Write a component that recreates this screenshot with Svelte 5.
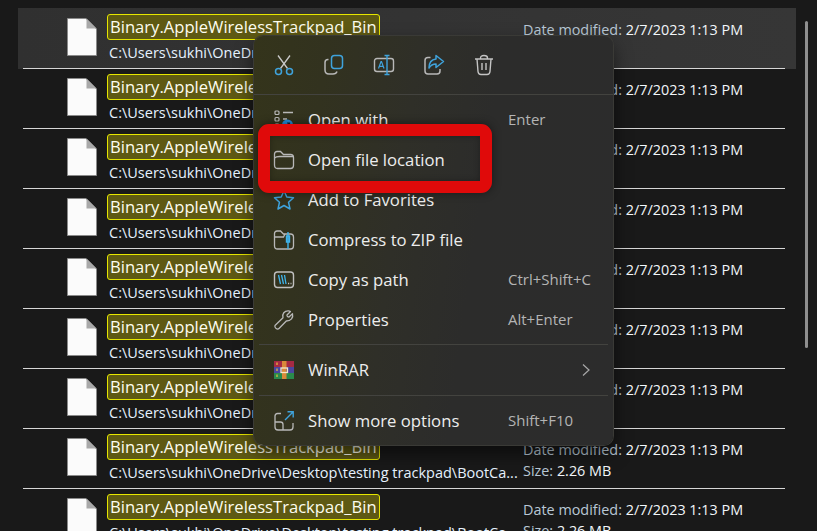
<script>
  const rows = [0, 1, 2, 3, 4, 5, 6, 7, 8];
  const path = "C:\\Users\\sukhi\\OneDrive\\Desktop\\testing trackpad\\BootCa...";
</script>

<div class="page">
  <div class="list">
    {#each rows as r}
      <div class="row" class:hover={r === 0}>
        <div class="row-main">
          <svg class="file" width="30" height="38" viewBox="0 0 30 38">
            <path d="M.5.5H19L29.500 11V37.500H.5Z" fill="#fbfbfb" stroke="#8a8a8a" />
            <path d="M19.500 .5V10.500H29.500Z" fill="#a8a8a8" />
          </svg>
          <div class="names">
            <div class="name">Binary.AppleWirelessTrackpad_Bin</div>
            <div class="sub">{path}</div>
          </div>
          <div class="meta">
            <div><span class="key">Date modified:</span> 2/7/2023 1:13 PM</div>
            <div><span class="key">Size:</span> 2.26 MB</div>
          </div>
        </div>
        <div class="sep"></div>
      </div>
    {/each}
  </div>

  <div class="scrollbar"></div>

  <div class="menu">
    <div class="tools">
      <svg width="22" height="22" viewBox="0 0 22 22" fill="none">
        <path d="M5 1.500 14.500 14.500M17 1.500 7.500 14.500" stroke="#c8c8c8" stroke-width="1.300" />
        <circle cx="5.500" cy="17.500" r="3" stroke="#3fa3dc" stroke-width="1.500" />
        <circle cx="16.500" cy="17.500" r="3" stroke="#3fa3dc" stroke-width="1.500" />
      </svg>
      <svg width="22" height="22" viewBox="0 0 22 22" fill="none">
        <rect x="8.500" y="1.500" width="11" height="13" rx="3" stroke="#3fa3dc" stroke-width="1.500" />
        <path d="M5.500 5.500H5C3 5.500 2 7 2 8.500V16C2 18.500 3.500 20 6 20H10C12 20 13.500 19 14 17.500" stroke="#b8b8b8" stroke-width="1.500" />
      </svg>
      <svg width="22" height="22" viewBox="0 0 22 22" fill="none">
        <path d="M14 4.500H4C2.500 4.500 1.500 5.500 1.500 7V15C1.500 16.500 2.500 17.500 4 17.500H14M14 4.500H18C19.500 4.500 20.500 5.500 20.500 7V15C20.500 16.500 19.500 17.500 18 17.500H14" stroke="#b8b8b8" stroke-width="1.400" />
        <path d="M14 2V20M11.500 1.500H16.500M11.500 20.500H16.500" stroke="#3fa3dc" stroke-width="1.400" />
        <path d="M5.500 14.500 8 7.500H8.500L11 14.500M6.400 12.300H10.100" stroke="#3fa3dc" stroke-width="1.200" />
      </svg>
      <svg width="22" height="22" viewBox="0 0 22 22" fill="none">
        <path d="M13 1.500 20.500 7.500 13 13.500V10C9.500 10 7.500 11.500 6 14 6 9 8.500 5.500 13 5Z" stroke="#3fa3dc" stroke-width="1.500" stroke-linejoin="round" />
        <path d="M7.500 3.500H5C3 3.500 2 4.500 2 6.500V17C2 19 3 20 5 20H14C16 20 17 19 17 17V15" stroke="#b8b8b8" stroke-width="1.500" />
      </svg>
      <svg width="22" height="22" viewBox="0 0 22 22" fill="none" stroke="#c4c4c4" stroke-width="1.400">
        <path d="M2 5H20M7.500 5V4C7.500 2.500 8.500 1.500 11 1.500 13.500 1.500 14.500 2.500 14.500 4V5" />
        <path d="M4 5 5 17.500C5.200 19.500 6.300 20.500 8 20.500H14C15.700 20.500 16.800 19.500 17 17.500L18 5" />
        <path d="M9 9V16M13 9V16" />
      </svg>
    </div>
    <div class="line full"></div>

    <div class="items">
      <div class="item">
        <svg width="22" height="22" viewBox="0 0 22 22" fill="none">
          <path d="M10 3.500H20M10 10H14" stroke="#b8b8b8" stroke-width="1.300" />
          <rect x="2" y="2" width="4" height="3.500" rx="1" stroke="#b8b8b8" stroke-width="1.200" />
          <rect x="2" y="8.500" width="4" height="3.500" rx="1" stroke="#b8b8b8" stroke-width="1.200" />
          <rect x="2" y="15" width="4" height="3.500" rx="1" stroke="#b8b8b8" stroke-width="1.200" />
          <circle cx="14.500" cy="16" r="5.500" fill="#1f88d8" />
          <path d="M12.500 18 16.500 14M14 14H16.500V16.500" stroke="#10203a" stroke-width="1.200" />
        </svg>
        <span class="label">Open with</span>
        <span class="key-hint">Enter</span>
      </div>
      <div class="item">
        <svg width="22" height="22" viewBox="0 0 22 22" fill="none" stroke="#b8b8b8" stroke-width="1.300">
          <path d="M1.500 16V5C1.500 3.500 2.500 2.500 4 2.500H7.500L10.500 5.500H17.500C19.500 5.500 20.500 6.500 20.500 8.500V16.500C20.500 18.500 19.500 19.500 17.500 19.500H4.500C2.500 19.500 1.500 18.500 1.500 16Z" />
          <path d="M1.500 9C3 7.500 4.500 7.500 6.500 7.500H20" />
        </svg>
        <span class="label">Open file location</span>
      </div>
      <div class="item">
        <svg width="22" height="22" viewBox="0 0 22 22" fill="none">
          <path d="M11 1.800 13.800 8 20.500 8.700 15.500 13.200 17 20 11 16.500 5 20 6.500 13.200 1.500 8.700 8.200 8Z" stroke="#3fa3dc" stroke-width="1.500" stroke-linejoin="round" />
        </svg>
        <span class="label">Add to Favorites</span>
      </div>
      <div class="item">
        <svg width="22" height="22" viewBox="0 0 22 22" fill="none">
          <path d="M1.500 17V4.500C1.500 3 2.500 2 4 2H7.500L10.500 5H17.500C19.500 5 20.500 6 20.500 8V17C20.500 19 19.500 20 17.500 20H4.500C2.500 20 1.500 19 1.500 17Z" stroke="#b8b8b8" stroke-width="1.300" />
          <path d="M1.500 8H10.500L12 5" stroke="#b8b8b8" stroke-width="1.300" />
          <path d="M15 3V20M13.500 7H16.500V13H13.500Z" stroke="#3fb4ec" stroke-width="1.400" />
        </svg>
        <span class="label">Compress to ZIP file</span>
      </div>
      <div class="item">
        <svg width="22" height="22" viewBox="0 0 22 22" fill="none">
          <rect x="1.500" y="3" width="19" height="15.500" rx="3" stroke="#c0c0c0" stroke-width="1.400" />
          <path d="M5.500 6 7.500 15M8.500 6 10.500 15M11.500 6 13 15" stroke="#3fb4ec" stroke-width="1.300" />
          <path d="M15 14.500H16.200M17.500 14.500H18.500" stroke="#c0c0c0" stroke-width="1.400" />
        </svg>
        <span class="label">Copy as path</span>
        <span class="key-hint">Ctrl+Shift+C</span>
      </div>
      <div class="item">
        <svg width="22" height="22" viewBox="0 0 22 22" fill="none">
          <path d="M2 16.500 10 8.700C8.800 5 11.500 1.500 15.500 1.800 16.500 1.900 17 2.200 17.500 2.500L14 6C13.800 7 14.500 8 16 8L19.500 4.800C20.500 8.500 18 12 13.300 12L6 19.500C4.500 21 1 19 2 16.500Z" stroke="#b8b8b8" stroke-width="1.300" stroke-linejoin="round" />
        </svg>
        <span class="label">Properties</span>
        <span class="key-hint">Alt+Enter</span>
      </div>
    </div>

    <div class="line"></div>

    <div class="item rar">
      <svg width="22" height="20" viewBox="0 0 22 20">
        <rect x="1" y="1" width="20" height="6" fill="#a52a44" />
        <rect x="1" y="7" width="20" height="6" fill="#4a46a0" />
        <rect x="1" y="13" width="20" height="6" fill="#2a8a4c" />
        <path d="M4 2.500V5M4 8.500V11M4 14.500V17" stroke="#e8c040" stroke-width="1.200" />
        <rect x="9" y="1" width="4.500" height="18" fill="#d98a3a" />
        <rect x="8" y="8" width="6.500" height="4.500" fill="none" stroke="#f4e8c8" stroke-width="1.300" />
      </svg>
      <span class="label">WinRAR</span>
      <svg class="chev" width="10" height="14" viewBox="0 0 10 14" fill="none">
        <path d="M2 1.500 8 7 2 12.500" stroke="#a8a8a8" stroke-width="1.200" />
      </svg>
    </div>

    <div class="line"></div>

    <div class="item">
      <svg width="22" height="22" viewBox="0 0 22 22" fill="none">
        <path d="M8 3.500H4.500C3 3.500 2 4.500 2 6V17C2 19 3 20 5 20H17C19 20 20 19 20 17V13" stroke="#b8b8b8" stroke-width="1.300" />
        <path d="M2 12H7.500C9 12 10 13 10 14.500V20" stroke="#b8b8b8" stroke-width="1.300" />
        <path d="M12 10 20 2M14.500 1.800H20.200V7.500" stroke="#3fa3dc" stroke-width="1.400" />
      </svg>
      <span class="label">Show more options</span>
      <span class="key-hint">Shift+F10</span>
    </div>

    <div class="callout"></div>
  </div>
</div>

<style>
  :global(body) {
    background: #191919;
  }

  .page {
    position: relative;
    width: 817px;
    height: 531px;
    overflow: hidden;
    background: #191919;
    font-family: "Open Sans", "Noto Sans", sans-serif;
    color: #fff;
  }

  .list {
    width: 778px;
    margin-left: 18px;
    padding-top: 9px;
  }

  .row {
    height: 60px;
    display: flex;
    flex-direction: column;
  }

  .row.hover {
    height: 61px;
    margin-top: -1px;
    padding-top: 1px;
    box-sizing: border-box;
    background: linear-gradient(90deg, #303030, #363636);
  }

  .row-main {
    flex: 1;
    display: flex;
    padding-left: 49px;
    min-height: 0;
  }

  .sep {
    height: 1px;
    margin: 0 11px 0 5px;
    background: #d6d6d6;
  }

  .file {
    flex: none;
    margin-top: 9px;
  }

  .names {
    width: 416px;
    margin-left: 10px;
    padding-top: 5px;
  }

  .name {
    width: fit-content;
    height: 26px;
    box-sizing: border-box;
    padding: 0 2px;
    border: 1px solid #e6e600;
    border-radius: 3px;
    background: #5e5913;
    font-size: 16.6px;
    line-height: 24px;
    white-space: nowrap;
    color: #fdfdf0;
  }

  .sub {
    margin: 3px 0 0 2px;
    font-size: 14.5px;
    line-height: 20px;
    white-space: nowrap;
    color: #e6f2ff;
  }

  .meta {
    padding-top: 10px;
    font-size: 14.4px;
    line-height: 21px;
    white-space: nowrap;
    color: #f2f6fa;
  }

  .key {
    color: #b9c8d6;
  }

  .scrollbar {
    position: absolute;
    left: 805px;
    top: 21px;
    width: 3px;
    height: 327px;
    border-radius: 2px;
    background: #8f8f8f;
  }

  .menu {
    position: absolute;
    left: 254px;
    top: 36px;
    width: 359px;
    height: 409px;
    box-sizing: border-box;
    border-radius: 9px;
    background: linear-gradient(98deg, #34341b 0%, #32321f 18%, #2f2f28 40%, #2c2c2b 60%, #2c2c2c 100%);
    box-shadow: 0 0 0 1px #3a3a36, 0 8px 18px rgba(0, 0, 0, 0.55);
  }

  .tools {
    height: 58px;
    display: flex;
    align-items: center;
    gap: 28px;
    padding-left: 19px;
  }

  .line {
    height: 1px;
    margin: 5px;
    background: #43433f;
  }

  .line.full {
    margin: 0;
  }

  .items {
    padding-top: 5px;
    margin-bottom: -1px;
  }

  .item {
    height: 40px;
    display: flex;
    align-items: center;
    padding-left: 19px;
    position: relative;
    font-size: 16.7px;
    color: #ededed;
  }

  .label {
    margin-left: 13px;
    padding-bottom: 2px;
    white-space: nowrap;
  }

  .key-hint {
    position: absolute;
    left: 254px;
    padding-bottom: 2px;
    font-size: 15px;
    color: #b4b4b4;
    white-space: nowrap;
  }

  .chev {
    position: absolute;
    left: 327px;
    top: 13px;
  }

  .callout {
    position: absolute;
    left: 4px;
    top: 88px;
    width: 234px;
    height: 69px;
    box-sizing: border-box;
    border: 12px solid #e00a0a;
    border-radius: 11px;
    box-shadow: 0 0 10px rgba(0, 0, 0, 0.45), inset 0 0 6px rgba(0, 0, 0, 0.3);
  }
</style>
